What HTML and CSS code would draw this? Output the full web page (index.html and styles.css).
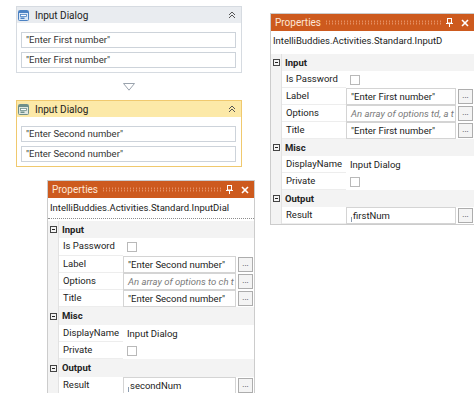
FILE: index.html
```html
<!DOCTYPE html>
<html lang="en">

<head>
    <meta charset="UTF-8">
    <title>Input Dialog</title>
    <link rel="stylesheet" href="styles.css">
</head>

<body>
    <div class="page">
        <div class="left">
            <!-- first activity -->
            <div class="card">
                <div class="card-head">
                    <svg class="act-icon" width="11" height="11" viewBox="0 0 11 11">
                        <rect x="0.5" y="0.5" width="10" height="10" rx="1" fill="#dbe8f7" stroke="#4c82c3" />
                        <rect x="1" y="1" width="9" height="2" fill="#4c82c3" />
                        <rect x="2.5" y="4.5" width="6" height="2" fill="#fff" stroke="#4c82c3" stroke-width="0.8" />
                        <rect x="2.5" y="7.5" width="4" height="1.5" fill="#4c82c3" />
                    </svg>
                    <span class="card-title">Input Dialog</span>
                    <svg class="collapse" width="8" height="8" viewBox="0 0 8 8">
                        <polyline points="1,4 4,1 7,4" fill="none" stroke="#555" stroke-width="1" />
                        <polyline points="1,7 4,4 7,7" fill="none" stroke="#555" stroke-width="1" />
                    </svg>
                </div>
                <div class="card-body">
                    <div class="field">"Enter First number"</div>
                    <div class="field">"Enter First number"</div>
                </div>
            </div>

            <div class="flow-arrow">
                <svg width="12" height="8" viewBox="0 0 12 8">
                    <polygon points="0.5,0.5 11.5,0.5 6,7.2" fill="#fff" stroke="#9aa3ad" stroke-width="1" />
                </svg>
            </div>

            <!-- second activity, selected -->
            <div class="card card-selected">
                <div class="card-head">
                    <svg class="act-icon" width="11" height="11" viewBox="0 0 11 11">
                        <rect x="0.5" y="0.5" width="10" height="10" rx="1" fill="#dfe6e0" stroke="#6f8f8a" />
                        <rect x="1" y="1" width="9" height="2" fill="#6f8f8a" />
                        <rect x="2.5" y="4.5" width="6" height="2" fill="#fff" stroke="#6f8f8a" stroke-width="0.8" />
                        <rect x="2.5" y="7.5" width="4" height="1.5" fill="#6f8f8a" />
                    </svg>
                    <span class="card-title">Input Dialog</span>
                    <svg class="collapse" width="8" height="8" viewBox="0 0 8 8">
                        <polyline points="1,4 4,1 7,4" fill="none" stroke="#555" stroke-width="1" />
                        <polyline points="1,7 4,4 7,7" fill="none" stroke="#555" stroke-width="1" />
                    </svg>
                </div>
                <div class="card-body">
                    <div class="field">"Enter Second number"</div>
                    <div class="field">"Enter Second number"</div>
                </div>
            </div>

            <!-- properties of the second activity -->
            <div class="props props-second">
                <div class="props-head">
                    <span class="props-title">Properties</span>
                    <span class="grip"></span>
                    <svg class="pin" width="7" height="9" viewBox="0 0 7 9">
                        <rect x="1.5" y="0.5" width="4" height="4.5" fill="none" stroke="#fff" />
                        <line x1="0" y1="5.5" x2="7" y2="5.5" stroke="#fff" />
                        <line x1="3.5" y1="5.5" x2="3.5" y2="9" stroke="#fff" />
                    </svg>
                    <svg class="close" width="8" height="8" viewBox="0 0 8 8">
                        <line x1="1" y1="1" x2="7" y2="7" stroke="#fff" stroke-width="1.6" />
                        <line x1="7" y1="1" x2="1" y2="7" stroke="#fff" stroke-width="1.6" />
                    </svg>
                </div>
                <div class="type-line"><span class="type-name">IntelliBuddies.Activities.Standard.InputDial</span></div>
                <div class="grid">
                    <div class="row cat"><span class="gutter"><i class="toggle"></i></span><span class="cat-title">Input</span></div>
                    <div class="row"><span class="gutter"></span><span class="name">Is Password</span><span class="value"><i class="check"></i></span></div>
                    <div class="row"><span class="gutter"></span><span class="name">Label</span><span class="value"><span class="box">"Enter Second number"</span><span class="more">...</span></span></div>
                    <div class="row"><span class="gutter"></span><span class="name">Options</span><span class="value"><span class="box hint">An array of options to ch t</span><span class="more">...</span></span></div>
                    <div class="row"><span class="gutter"></span><span class="name">Title</span><span class="value"><span class="box">"Enter Second number"</span><span class="more">...</span></span></div>
                    <div class="row cat"><span class="gutter"><i class="toggle"></i></span><span class="cat-title">Misc</span></div>
                    <div class="row"><span class="gutter"></span><span class="name">DisplayName</span><span class="value"><span class="plain">Input Dialog</span></span></div>
                    <div class="row"><span class="gutter"></span><span class="name">Private</span><span class="value"><i class="check"></i></span></div>
                    <div class="row cat"><span class="gutter"><i class="toggle"></i></span><span class="cat-title">Output</span></div>
                    <div class="row"><span class="gutter"></span><span class="name">Result</span><span class="value"><span class="box"><i class="caret"></i>secondNum</span><span class="more">...</span></span></div>
                </div>
            </div>
        </div>

        <div class="right">
            <!-- properties of the first activity -->
            <div class="props props-first">
                <div class="props-head">
                    <span class="props-title">Properties</span>
                    <span class="grip"></span>
                    <svg class="pin" width="7" height="9" viewBox="0 0 7 9">
                        <rect x="1.5" y="0.5" width="4" height="4.5" fill="none" stroke="#fff" />
                        <line x1="0" y1="5.5" x2="7" y2="5.5" stroke="#fff" />
                        <line x1="3.5" y1="5.5" x2="3.5" y2="9" stroke="#fff" />
                    </svg>
                    <svg class="close" width="8" height="8" viewBox="0 0 8 8">
                        <line x1="1" y1="1" x2="7" y2="7" stroke="#fff" stroke-width="1.6" />
                        <line x1="7" y1="1" x2="1" y2="7" stroke="#fff" stroke-width="1.6" />
                    </svg>
                </div>
                <div class="type-line"><span class="type-name">IntelliBuddies.Activities.Standard.InputD</span></div>
                <div class="grid">
                    <div class="row cat"><span class="gutter"><i class="toggle"></i></span><span class="cat-title">Input</span></div>
                    <div class="row"><span class="gutter"></span><span class="name">Is Password</span><span class="value"><i class="check"></i></span></div>
                    <div class="row"><span class="gutter"></span><span class="name">Label</span><span class="value"><span class="box">"Enter First number"</span><span class="more">...</span></span></div>
                    <div class="row"><span class="gutter"></span><span class="name">Options</span><span class="value"><span class="box hint">An array of options td, a t</span><span class="more">...</span></span></div>
                    <div class="row"><span class="gutter"></span><span class="name">Title</span><span class="value"><span class="box">"Enter First number"</span><span class="more">...</span></span></div>
                    <div class="row cat"><span class="gutter"><i class="toggle"></i></span><span class="cat-title">Misc</span></div>
                    <div class="row"><span class="gutter"></span><span class="name">DisplayName</span><span class="value"><span class="plain">Input Dialog</span></span></div>
                    <div class="row"><span class="gutter"></span><span class="name">Private</span><span class="value"><i class="check"></i></span></div>
                    <div class="row cat"><span class="gutter"><i class="toggle"></i></span><span class="cat-title">Output</span></div>
                    <div class="row"><span class="gutter"></span><span class="name">Result</span><span class="value"><span class="box"><i class="caret"></i>firstNum</span><span class="more">...</span></span></div>
                </div>
            </div>
        </div>
    </div>
</body>

</html>
```

FILE: styles.css
```css
* {
    margin: 0;
    padding: 0;
    box-sizing: border-box;
}

html,
body {
    width: 474px;
    height: 393px;
    overflow: hidden;
    background-color: #fff;
}

body {
    font-family: Roboto, "Liberation Sans", sans-serif;
    font-size: 9.5px;
    color: #222;
}

.page {
    display: flex;
}

.left {
    width: 256px;
    flex: none;
    padding: 6px 0 0 16px;
}

.right {
    padding: 13px 0 0 14px;
}

/* activity cards */
.card {
    width: 226px;
    border: 1px solid #d6dbe1;
    background-color: #fff;
}

.card-head {
    height: 16px;
    display: flex;
    align-items: center;
    padding: 0 5px 0 1px;
    background-color: #e9ecf0;
}

.card-title {
    flex: 1;
    margin-left: 6px;
    font-size: 10px;
    color: #1c1c1c;
}

.card-body {
    padding: 9px 5px 4px 4px;
}

.field {
    height: 16px;
    border: 1px solid #cdd3da;
    padding-left: 4px;
    line-height: 14px;
    color: #333;
}

.field + .field {
    margin-top: 4px;
}

.card-selected {
    border-color: #f0c96e;
}

.card-selected .card-head {
    background-color: #fce9a8;
}

.flow-arrow {
    width: 226px;
    height: 27px;
    display: flex;
    justify-content: center;
    padding-top: 10px;
}

/* property panels */
.props {
    border: 1px solid #cccccc;
    background-color: #fff;
}

.props-first {
    width: 205px;
}

.props-second {
    width: 208px;
    margin: 13px 0 0 31px;
}

.props-head {
    height: 17px;
    display: flex;
    align-items: center;
    gap: 4px;
    padding: 0 5px 0 4px;
    background-color: #cd5a1e;
}

.props-title {
    color: #fde6d6;
    font-size: 10px;
}

.grip {
    flex: 1;
    height: 5px;
    background-image: radial-gradient(circle, #eb9d74 0.7px, transparent 0.9px);
    background-size: 3px 2.5px;
}

.close {
    margin-left: 4px;
}

.type-line {
    height: 21px;
    line-height: 20px;
    padding-left: 2px;
    white-space: nowrap;
    overflow: hidden;
    border-bottom: 1px dotted transparent;
}

.props-second .type-line {
    border-bottom-color: #8c8c8c;
}

.grid {
    margin-top: 2px;
}

.row {
    display: flex;
    height: 17px;
}

.props-second .row {
    height: 17.3px;
}

.gutter {
    width: 11px;
    flex: none;
    display: flex;
    align-items: center;
    justify-content: center;
    background-color: #f3f3f3;
    border-right: 1px solid #e2e2e2;
}

.toggle {
    width: 7px;
    height: 7px;
    border: 1px solid #444;
    position: relative;
}

.toggle::after {
    content: "";
    position: absolute;
    left: 1px;
    top: 2px;
    width: 3px;
    height: 1px;
    background-color: #222;
}

.cat-title {
    flex: 1;
    padding-left: 3px;
    font-weight: 700;
    line-height: 17px;
    background-color: #f3f3f3;
}

.name {
    width: 64px;
    flex: none;
    padding-left: 4px;
    line-height: 16px;
    border-bottom: 1px solid #ededed;
    white-space: nowrap;
    overflow: hidden;
}

.value {
    flex: 1;
    min-width: 0;
    display: flex;
    align-items: center;
}

.box {
    flex: 1;
    min-width: 0;
    height: 17px;
    border: 1px solid #d4d4d4;
    padding-left: 4px;
    line-height: 15px;
    white-space: nowrap;
    overflow: hidden;
}

.hint {
    font-style: italic;
    color: #7a7a7a;
}

.more {
    width: 15px;
    height: 15px;
    flex: none;
    margin: 0 1px 0 2px;
    border: 1px solid #adadad;
    background-color: #f4f4f4;
    font-size: 8px;
    line-height: 12px;
    text-align: center;
    color: #333;
}

.check {
    width: 10px;
    height: 10px;
    margin-left: 4px;
    border: 1px solid #b9b9b9;
    background-color: #fff;
}

.plain {
    padding-left: 4px;
}

/* text cursor left in the Result box */
.caret {
    display: inline-block;
    width: 1px;
    height: 5px;
    margin-right: 1px;
    vertical-align: -3px;
    background-color: #8a9bb0;
}
```
